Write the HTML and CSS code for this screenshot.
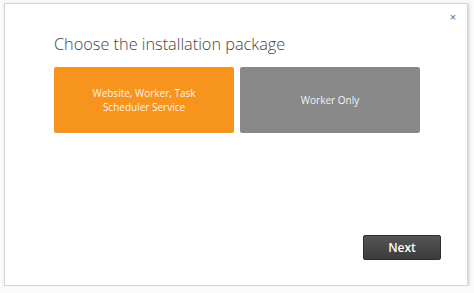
FILE: index.html
```html
<!DOCTYPE html>
<html lang="en">

<head>
    <meta charset="UTF-8">
    <meta name="viewport" content="width=device-width, initial-scale=1.0">
    <title>Choose the installation package</title>
    <link rel="stylesheet" href="styles.css">
</head>

<body>
    <div class="dialog">
        <button class="close-button" aria-label="Close">&times;</button>

        <h1 class="title">Choose the installation package</h1>

        <!-- Package options -->
        <div class="packages">
            <button class="package package-full">Website, Worker, Task<br>Scheduler Service</button>
            <button class="package package-worker">Worker Only</button>
        </div>

        <div class="footer">
            <button class="next-button">Next</button>
        </div>
    </div>
</body>

</html>
```

FILE: styles.css
```css
body {
    margin: 0;
    background-color: #fafafa;
    font-family: "Open Sans", Arial, sans-serif;
}

.dialog {
    position: relative;
    box-sizing: border-box;
    width: 464px;
    height: 283px;
    margin: 3px 0 0 4px;
    padding: 0 26px 25px 49px;
    background-color: #fff;
    border: 1px solid #d4d4d4;
    box-shadow: 1px 1px 3px rgba(0, 0, 0, 0.18);
    display: flex;
    flex-direction: column;
}

.close-button {
    position: absolute;
    top: 7px;
    right: 8px;
    width: 12px;
    height: 12px;
    padding: 0;
    border: none;
    background: none;
    color: #666;
    font-size: 11px;
    line-height: 12px;
    cursor: pointer;
}

.title {
    margin: 29px 0 0 0;
    font-size: 16.3px;
    font-weight: 300;
    line-height: 22px;
    color: #444;
}

.packages {
    display: flex;
    gap: 6px;
    margin-top: 12px;
}

.package {
    width: 180px;
    height: 66px;
    border: none;
    border-radius: 2px;
    color: #fdf1e4;
    font-family: "Open Sans", Arial, sans-serif;
    font-size: 10px;
    line-height: 14px;
    cursor: pointer;
}

.package-full {
    background-color: #f7941e;
}

.package-worker {
    background-color: #898989;
    color: #f4f4f4;
}

.footer {
    margin-top: auto;
    display: flex;
    justify-content: flex-end;
}

.next-button {
    width: 78px;
    height: 25px;
    border: 1px solid #2e2e2e;
    border-radius: 2px;
    background: linear-gradient(#555, #3c3c3c);
    color: #fff;
    font-family: "Open Sans", Arial, sans-serif;
    font-size: 12px;
    font-weight: 600;
    cursor: pointer;
}
```
